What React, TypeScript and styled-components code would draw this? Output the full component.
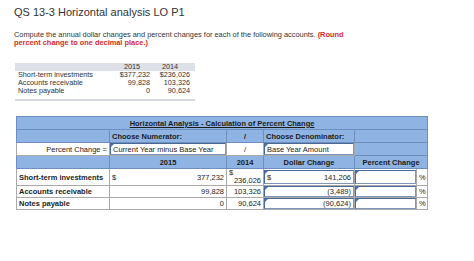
import React from "react";
import styled, { createGlobalStyle } from "styled-components";

const GlobalStyle = createGlobalStyle`
  html, body {
    margin: 0;
    padding: 0;
    background: #ffffff;
  }
  body {
    font-family: "Liberation Sans", Arial, sans-serif;
    color: #2b2b2b;
  }
`;

const Page = styled.div`
  width: 474px;
  height: 261px;
  padding: 6px 0 0 14px;
  box-sizing: border-box;
  display: flex;
  flex-direction: column;
`;

const Title = styled.h1`
  margin: 0;
  font-size: 11px;
  line-height: 12px;
  font-weight: normal;
  color: #333;
`;

const Prompt = styled.p`
  margin: 13px 0 0 0;
  font-size: 7.4px;
  line-height: 8px;
  color: #333;
  white-space: nowrap;
`;

const Hint = styled.span`
  color: #d62b2b;
  font-weight: bold;
`;

const DataBox = styled.div`
  margin: 16px 0 0 1px;
  width: 180px;
  border-bottom: 2px solid #d5d8dd;
  padding-bottom: 4px;
  font-size: 7.25px;
  line-height: 8px;
  color: #333;
`;

const DataRow = styled.div<{ $head?: boolean }>`
  display: grid;
  grid-template-columns: 1fr 36px 40px;
  padding: 0 5px 0 3px;
  background: ${(p) => (p.$head ? "#dde0e6" : "transparent")};
`;

const DataCell = styled.span<{ $center?: boolean }>`
  text-align: ${(p) => (p.$center ? "center" : "right")};
  &:first-child {
    text-align: left;
  }
`;

const Sheet = styled.table`
  margin: 15px 0 0 2px;
  border-collapse: collapse;
  table-layout: fixed;
  width: 411px;
  font-size: 7.5px;
  line-height: 9px;
  color: #1c1c1c;
`;

const Row = styled.tr<{ $h: number }>`
  height: ${(p) => p.$h}px;
`;

const Cell = styled.td<{
  $blue?: boolean;
  $align?: "left" | "center" | "right";
  $bold?: boolean;
}>`
  padding: 0 2px;
  box-sizing: border-box;
  background: ${(p) => (p.$blue ? "#8fb4e3" : "#ffffff")};
  border: 1px solid ${(p) => (p.$blue ? "#6d8fbd" : "#a9a9a9")};
  text-align: ${(p) => p.$align || "left"};
  font-weight: ${(p) => (p.$bold ? "bold" : "normal")};
  vertical-align: middle;
  white-space: nowrap;
  overflow: hidden;
`;

const Caption = styled.span`
  text-decoration: underline;
`;

const Field = styled.div<{ $align?: "left" | "right"; $h: number }>`
  position: relative;
  display: flex;
  justify-content: ${(p) => (p.$align === "right" ? "flex-end" : "space-between")};
  align-items: center;
  height: ${(p) => p.$h}px;
  margin: 0 -2px;
  padding: 0 2px;
  background: #fff;
  border: 1px solid #7f97bd;
  border-left-color: #4a6896;
  border-top-color: #4a6896;
  box-sizing: border-box;
  &::before {
    content: "";
    position: absolute;
    left: 0;
    top: 0;
    border-top: 3px solid #3d78c6;
    border-right: 3px solid transparent;
  }
`;

const Money = styled.div`
  display: flex;
  justify-content: space-between;
`;

const Stack = styled.div`
  display: flex;
  flex-direction: column;
  line-height: 8px;
`;

const Dollar = styled.span`
  text-align: left;
`;

const Amount = styled.span`
  text-align: right;
`;

const years = [
  { name: "Short-term investments", y15: "$377,232", y14: "$236,026" },
  { name: "Accounts receivable", y15: "99,828", y14: "103,326" },
  { name: "Notes payable", y15: "0", y14: "90,624" },
];

const rows = [
  { name: "Short-term investments", y15: "377,232", y14: "236,026", change: "141,206", sign: true },
  { name: "Accounts receivable", y15: "99,828", y14: "103,326", change: "(3,489)", sign: false },
  { name: "Notes payable", y15: "0", y14: "90,624", change: "(90,624)", sign: false },
];

export default function App() {
  return (
    <>
      <GlobalStyle />
      <Page>
        <Title>QS 13-3 Horizontal analysis LO P1</Title>
        <Prompt>
          Compute the annual dollar changes and percent changes for each of the following accounts.{" "}
          <Hint>
            (Round
            <br />
            percent change to one decimal place.)
          </Hint>
        </Prompt>

        <DataBox>
          <DataRow $head>
            <DataCell />
            <DataCell $center>2015</DataCell>
            <DataCell $center>2014</DataCell>
          </DataRow>
          {years.map((r) => (
            <DataRow key={r.name}>
              <DataCell>{r.name}</DataCell>
              <DataCell>{r.y15}</DataCell>
              <DataCell>{r.y14}</DataCell>
            </DataRow>
          ))}
        </DataBox>

        <Sheet>
          <colgroup>
            <col style={{ width: 93 }} />
            <col style={{ width: 117 }} />
            <col style={{ width: 37 }} />
            <col style={{ width: 91 }} />
            <col style={{ width: 62 }} />
            <col style={{ width: 11 }} />
          </colgroup>
          <tbody>
            <Row $h={13}>
              <Cell $blue $bold $align="center" colSpan={6}>
                <Caption>Horizontal Analysis - Calculation of Percent Change</Caption>
              </Cell>
            </Row>
            <Row $h={13}>
              <Cell $blue />
              <Cell $blue $bold>Choose Numerator:</Cell>
              <Cell $blue $bold $align="center">/</Cell>
              <Cell $blue $bold>Choose Denominator:</Cell>
              <Cell $blue colSpan={2} />
            </Row>
            <Row $h={13}>
              <Cell $align="right">Percent Change =</Cell>
              <Cell>
                <Field $h={12}>Current Year minus Base Year</Field>
              </Cell>
              <Cell $align="center">/</Cell>
              <Cell>
                <Field $h={12}>Base Year Amount</Field>
              </Cell>
              <Cell $blue colSpan={2} />
            </Row>
            <Row $h={13}>
              <Cell $blue />
              <Cell $blue $bold $align="center">2015</Cell>
              <Cell $blue $bold $align="center">2014</Cell>
              <Cell $blue $bold $align="center">Dollar Change</Cell>
              <Cell $blue $bold $align="center" colSpan={2}>Percent Change</Cell>
            </Row>
            {rows.map((r) => (
              <Row $h={r.sign ? 16 : 12} key={r.name}>
                <Cell $bold>{r.name}</Cell>
                <Cell>
                  <Money>
                    {r.sign ? <Dollar>$</Dollar> : <span />}
                    <Amount>{r.y15}</Amount>
                  </Money>
                </Cell>
                <Cell $align="right">
                  {r.sign ? (
                    <Stack>
                      <Dollar>$</Dollar>
                      <Amount>{r.y14}</Amount>
                    </Stack>
                  ) : (
                    r.y14
                  )}
                </Cell>
                <Cell>
                  <Field $h={r.sign ? 14 : 11} $align={r.sign ? undefined : "right"}>
                    {r.sign && <Dollar>$</Dollar>}
                    <Amount>{r.change}</Amount>
                  </Field>
                </Cell>
                <Cell>
                  <Field $h={r.sign ? 14 : 11} />
                </Cell>
                <Cell $align="center">%</Cell>
              </Row>
            ))}
          </tbody>
        </Sheet>
      </Page>
    </>
  );
}
